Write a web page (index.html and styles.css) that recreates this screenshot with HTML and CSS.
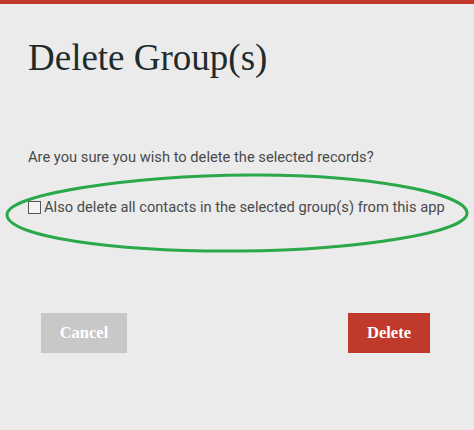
FILE: index.html
```html
<!DOCTYPE html>
<html>
<head>
<meta charset="utf-8">
<link rel="stylesheet" href="styles.css">
</head>
<body>
<div class="dialog">
  <h1 class="title">Delete Group(s)</h1>
  <p class="question">Are you sure you wish to delete the selected records?</p>
  <label class="check-row"><span class="box"></span>Also delete all contacts in the selected group(s) from this app</label>
  <div class="actions">
    <button class="btn btn-cancel">Cancel</button>
    <button class="btn btn-delete">Delete</button>
  </div>
  <svg class="annot" width="474" height="92" viewBox="0 0 474 92">
    <path d="M250 11 C 360 10, 466 28, 467 49 C 468 68, 360 86, 240 87 C 110 88, 8 72, 7 51 C 6 30, 130 12, 250 11 Z" fill="none" stroke="#2aa84a" stroke-width="3"/>
  </svg>
</div>
</body>
</html>
```
FILE: styles.css
```css
html, body {
  margin: 0;
  padding: 0;
  background: #ebebeb;
}
.dialog {
  position: relative;
  width: 474px;
  height: 430px;
  box-sizing: border-box;
  border-top: 4px solid #c0392b;
  padding: 32px 0 0 28px;
  font-family: Roboto, "Liberation Sans", sans-serif;
}
.title {
  margin: 0;
  font-family: "Liberation Serif", serif;
  font-weight: normal;
  font-size: 37px;
  line-height: 44px;
  color: #1e2b2b;
}
.question {
  margin: 67px 0 0 0;
  font-size: 14.7px;
  line-height: 20px;
  color: #4a4a4a;
}
.check-row {
  display: flex;
  align-items: center;
  margin-top: 30px;
  font-size: 14.7px;
  line-height: 20px;
  color: #4a4a4a;
}
.box {
  width: 11px;
  height: 11px;
  border: 1px solid #555;
  background: #f4f4f4;
  margin-right: 3px;
}
.actions {
  display: flex;
  justify-content: space-between;
  margin-top: 96px;
  padding: 0 44px 0 13px;
}
.btn {
  border: none;
  height: 40px;
  font-family: "Liberation Serif", serif;
  font-weight: bold;
  font-size: 16.5px;
  color: #fff;
  padding: 0;
}
.btn-cancel {
  width: 86px;
  background: #c8c8c8;
}
.btn-delete {
  width: 82px;
  background: #c0392b;
}
.annot {
  position: absolute;
  left: 0;
  top: 160px;
}
```
